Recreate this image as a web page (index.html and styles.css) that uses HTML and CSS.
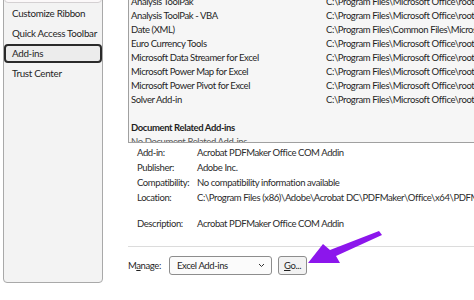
FILE: index.html
```html
<!DOCTYPE html>
<html lang="en">
<head>
  <meta charset="UTF-8">
  <title>Excel Options - Add-ins</title>
  <link rel="stylesheet" href="styles.css">
</head>
<body>

  <div class="window">
    <nav class="sidebar">
      <div class="nav-item nav-item-hover">Advanced</div>
      <div class="nav-item">Customize Ribbon</div>
      <div class="nav-item">Quick Access Toolbar</div>
      <div class="nav-item nav-item-active">Add-ins</div>
      <div class="nav-item">Trust Center</div>
    </nav>

    <main class="content">
      <div class="addin-list">
        <div class="row"><span>Analysis ToolPak</span><span>C:\Program Files\Microsoft Office\root\Office16\Library\Analysis\ANALYS32.XLL</span></div>
        <div class="row"><span>Analysis ToolPak - VBA</span><span>C:\Program Files\Microsoft Office\root\Office16\Library\Analysis\ATPVBAEN.XLAM</span></div>
        <div class="row"><span>Date (XML)</span><span>C:\Program Files\Common Files\Microsoft Shared\Smart Tag\MOFL.DLL</span></div>
        <div class="row"><span>Euro Currency Tools</span><span>C:\Program Files\Microsoft Office\root\Office16\Library\EUROTOOL.XLAM</span></div>
        <div class="row"><span>Microsoft Data Streamer for Excel</span><span>C:\Program Files\Microsoft Office\root\Office16\ADDINS\DataStreamer.dll</span></div>
        <div class="row"><span>Microsoft Power Map for Excel</span><span>C:\Program Files\Microsoft Office\root\Office16\ADDINS\Power Map Excel Add-in</span></div>
        <div class="row"><span>Microsoft Power Pivot for Excel</span><span>C:\Program Files\Microsoft Office\root\Office16\ADDINS\PowerPivot Excel Add-in</span></div>
        <div class="row"><span>Solver Add-in</span><span>C:\Program Files\Microsoft Office\root\Office16\Library\SOLVER\SOLVER.XLAM</span></div>
        <div class="row"><span></span><span></span></div>
        <div class="row group"><span>Document Related Add-ins</span><span></span></div>
        <div class="row"><span class="muted">No Document Related Add-ins</span><span></span></div>
      </div>

      <div class="details">
        <div class="detail"><span class="label">Add-in:</span><span>Acrobat PDFMaker Office COM Addin</span></div>
        <div class="detail"><span class="label">Publisher:</span><span>Adobe Inc.</span></div>
        <div class="detail"><span class="label">Compatibility:</span><span>No compatibility information available</span></div>
        <div class="detail"><span class="label">Location:</span><span>C:\Program Files (x86)\Adobe\Acrobat DC\PDFMaker\Office\x64\PDFMOfficeAddin.dll</span></div>
        <div class="detail detail-gap"><span class="label">Description:</span><span>Acrobat PDFMaker Office COM Addin</span></div>
      </div>

      <div class="manage">
        <span class="manage-label">M<u>a</u>nage:</span>
        <div class="select">
          <span>Excel Add-ins</span>
          <svg width="7" height="5" viewBox="0 0 7 5"><path d="M1 1 L3.5 3.5 L6 1" fill="none" stroke="#333" stroke-width="1"/></svg>
        </div>
        <button class="go"><u>G</u>o...</button>
      </div>
    </main>
  </div>

  <svg class="arrow" width="474" height="300" viewBox="0 0 474 300">
    <polygon points="379,231 382,235 336,256 340,263 308,263 323,244 330,250" fill="#8c16ec"/>
  </svg>

</body>
</html>
```

FILE: styles.css
```css
* { box-sizing: border-box; }

body, html {
  margin: 0;
  padding: 0;
  height: 100%;
  background: #fff;
  font-family: Lato, 'Open Sans', sans-serif;
  font-size: 9.5px;
  letter-spacing: -0.4px;
  color: #1f1f1f;
  overflow: hidden;
}

.window {
  display: flex;
  align-items: flex-start;
}

.sidebar {
  flex: none;
  width: 100px;
  height: 303px;
  margin: -20px 0 0 3px;
  padding: 3px 0;
  background: #f3f3f3;
  border: 1px solid #a9a9a9;
  border-radius: 4px;
  display: flex;
  flex-direction: column;
  gap: 1px;
}

.nav-item {
  height: 19px;
  line-height: 15px;
  padding-left: 6px;
  border: 2px solid transparent;
  border-radius: 4px;
  white-space: nowrap;
  font-size: 9.8px;
  letter-spacing: -0.3px;
}

.nav-item-hover {
  background: #fbf8f9;
  border: 1px solid #d4d0d2;
}

.nav-item-active {
  background: #ececec;
  border-color: #2a2a2a;
}

.content {
  flex: 1;
  min-width: 0;
  margin-left: 25px;
}

.addin-list {
  height: 149px;
  margin-top: -6px;
  padding-left: 2px;
  background: #f6f6f6;
  border: 1px solid #a0a0a0;
  border-right: none;
  overflow: hidden;
}

.row {
  display: grid;
  grid-template-columns: 195px auto;
  height: 14px;
  line-height: 14px;
  white-space: nowrap;
}

.row.group {
  font-weight: bold;
}

.muted {
  color: #555;
}

.details {
  margin-top: 2px;
  padding-left: 9px;
  color: #2b2b2b;
}

.detail {
  display: flex;
  height: 15px;
  line-height: 15px;
  white-space: nowrap;
}

.detail .label {
  flex: none;
  width: 60px;
}

.detail-gap {
  margin-top: 11px;
}

.manage {
  display: flex;
  align-items: center;
  margin-top: 15px;
  padding-top: 8px;
  border-top: 1px solid #dcdcdc;
}

.manage-label {
  width: 41px;
}

.select {
  width: 103px;
  height: 19px;
  padding: 0 6px 0 7px;
  display: flex;
  align-items: center;
  justify-content: space-between;
  background: #fbfbfb;
  border: 1px solid #8d8d8d;
  border-radius: 3px;
}

.go {
  width: 29px;
  height: 19px;
  margin: 1px 0 0 6px;
  padding: 0;
  font: inherit;
  letter-spacing: inherit;
  color: inherit;
  background: #f2f2f2;
  border: 1px solid #8d8d8d;
  border-radius: 3px;
}

.arrow {
  position: absolute;
  top: 0;
  left: 0;
  pointer-events: none;
}
```
